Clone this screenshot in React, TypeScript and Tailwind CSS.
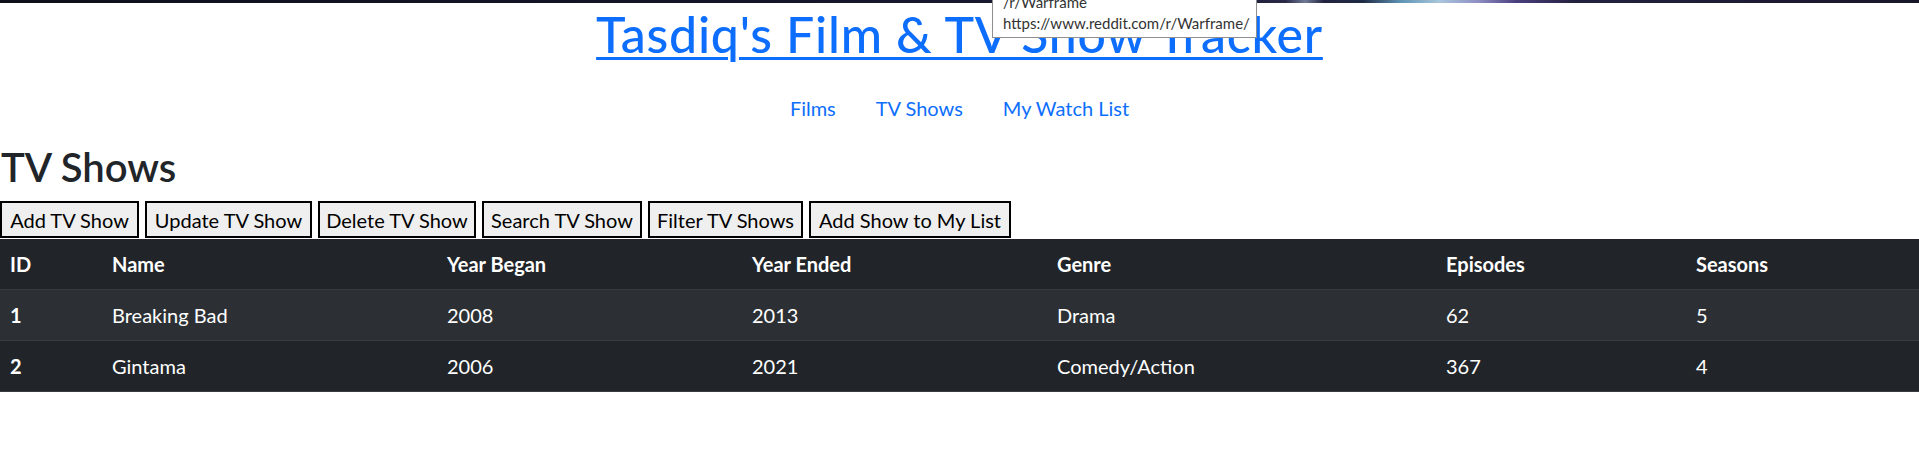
const buttons: { label: string; w: string }[] = [
  { label: 'Add TV Show', w: 'w-[139px]' },
  { label: 'Update TV Show', w: 'w-[167px]' },
  { label: 'Delete TV Show', w: 'w-[158px]' },
  { label: 'Search TV Show', w: 'w-[160px]' },
  { label: 'Filter TV Shows', w: 'w-[155px]' },
  { label: 'Add Show to My List', w: 'w-[202px]' },
];

const cols: { label: string; w: string }[] = [
  { label: 'ID', w: 'w-[102px]' },
  { label: 'Name', w: 'w-[335px]' },
  { label: 'Year Began', w: 'w-[305px]' },
  { label: 'Year Ended', w: 'w-[305px]' },
  { label: 'Genre', w: 'w-[389px]' },
  { label: 'Episodes', w: 'w-[250px]' },
  { label: 'Seasons', w: 'w-[233px]' },
];

const rows = [
  ['1', 'Breaking Bad', '2008', '2013', 'Drama', '62', '5'],
  ['2', 'Gintama', '2006', '2021', 'Comedy/Action', '367', '4'],
];

export default function App() {
  return (
    <div className="relative w-[1919px] min-h-[476px] bg-white font-['Lato',sans-serif] text-[#212529] text-[20px] leading-[30px] overflow-hidden">
      {/* top strip */}
      <div className="h-[3px] w-full bg-[linear-gradient(90deg,#0f0f1b_0%,#15152a_40%,#1b1a33_64%,#2a2a48_67%,#6f7a96_68%,#232340_69%,#1e2a44_71%,#5f93b5_73%,#a9c6dc_75%,#8f8fc4_77%,#4a3f7e_79%,#24213f_82%,#181629_100%)]" />

      {/* tooltip */}
      <div className="absolute left-[992px] top-[-12px] z-10 w-[265px] border border-[#8f8f8f] bg-white pl-[10px] pr-[6px] pt-[3px] pb-[3px] text-[15px] leading-[21px] text-[#333333]">
        <div>/r/Warframe</div>
        <div>https://www.reddit.com/r/Warframe/</div>
      </div>

      <h1 className="mt-[1px] text-center text-[50px] leading-[60px] font-medium">
        <a
          href="#"
          className="text-[#0d6efd] underline decoration-[3px] underline-offset-[4px] tracking-[0.75px]"
        >
          Tasdiq's Film &amp; TV Show Tracker
        </a>
      </h1>

      <nav className="mt-[29px] flex justify-center">
        <a href="#" className="px-[20px] text-[#0d6efd]">Films</a>
        <a href="#" className="px-[20px] text-[#0d6efd]">TV Shows</a>
        <a href="#" className="px-[20px] text-[#0d6efd]">My Watch List</a>
      </nav>

      <h2 className="mt-[20px] pl-[1px] text-[40px] leading-[48px] font-semibold">TV Shows</h2>

      <div className="mt-[10px] flex gap-[6px] pb-[1px]">
        {buttons.map((b) => (
          <button
            key={b.label}
            className={`${b.w} h-[37px] box-border border-2 border-black bg-[#efefef] text-black text-[20px] leading-[30px] flex items-center justify-center whitespace-nowrap`}
          >
            {b.label}
          </button>
        ))}
      </div>

      <div className="bg-[#212529] text-white">
        <div className="flex h-[51px] border-b border-[#373b3e]">
          {cols.map((c) => (
            <div key={c.label} className={`${c.w} px-[10px] py-[10px] font-bold`}>
              {c.label}
            </div>
          ))}
        </div>
        {rows.map((r, i) => (
          <div
            key={r[0]}
            className={`flex h-[51px] border-b border-[#373b3e] ${i === 0 ? 'bg-[#2c3034]' : 'bg-[#212529]'}`}
          >
            {r.map((v, j) => (
              <div key={j} className={`${cols[j].w} px-[10px] py-[10px] ${j === 0 ? 'font-bold' : ''}`}>
                {v}
              </div>
            ))}
          </div>
        ))}
      </div>
    </div>
  );
}
